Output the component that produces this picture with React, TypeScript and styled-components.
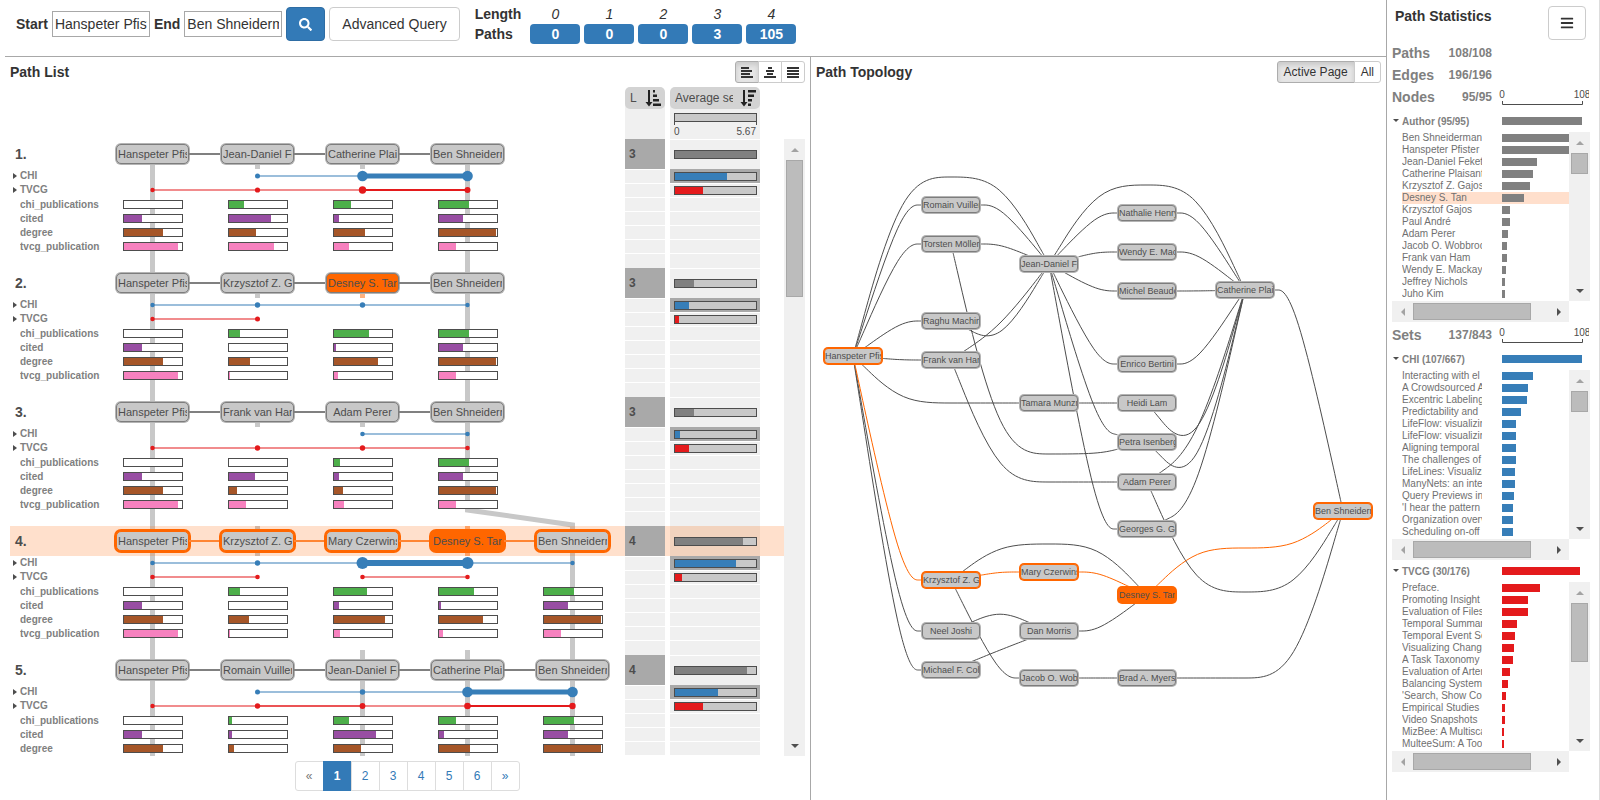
import React from "react";
import styled, { createGlobalStyle, css } from "styled-components";
import { FaSearch, FaBars } from "react-icons/fa";

const BLUE = "#377eb8";
const RED = "#e41a1c";
const GREY = "#808080";
const ORANGE = "#ff6600";
const LINE = "#a8a8a8";

const GlobalStyle = createGlobalStyle`
  *, *::before, *::after { box-sizing: border-box; }
  body {
    margin: 0;
    background: #fff;
    color: #333;
    font-family: "Liberation Sans", Arial, sans-serif;
    font-size: 14px;
    line-height: 20px;
  }
  button, input { font-family: inherit; color: inherit; }
  button { cursor: pointer; }
`;

/* ---------- data ---------- */

type Track = { from: number; radii: number[]; segs: number[] };
type PathInfo = {
  names: string[];
  chi: Track;
  tvcg: Track[];
  bars: number[][];
  avg: number[];
  length: number;
  active?: boolean;
};

const PATHS: PathInfo[] = [
  {
    names: ["Hanspeter Pfister", "Jean-Daniel Fekete", "Catherine Plaisant", "Ben Shneiderman"],
    chi: { from: 1, radii: [2.5, 5.3, 5.3], segs: [1, 5] },
    tvcg: [{ from: 0, radii: [2.2, 2.6, 3.7, 3], segs: [1, 1, 2] }],
    bars: [[0, 15, 17, 30], [18, 42, 5, 24], [39, 27, 31, 57], [54, 45, 15, 17]],
    avg: [81, 52, 28],
    length: 3,
  },
  {
    names: ["Hanspeter Pfister", "Krzysztof Z. Gajos", "Desney S. Tan", "Ben Shneiderman"],
    chi: { from: 0, radii: [2.2, 2.7, 2.7, 2.2], segs: [1, 1, 1] },
    tvcg: [{ from: 0, radii: [2.2, 2.5], segs: [1] }],
    bars: [[0, 11, 35, 30], [18, 0, 2, 24], [39, 21, 44, 57], [54, 1, 4, 17]],
    avg: [19, 14, 4],
    length: 3,
  },
  {
    names: ["Hanspeter Pfister", "Frank van Ham", "Adam Perer", "Ben Shneiderman"],
    chi: { from: 2, radii: [2.3, 2.3], segs: [1] },
    tvcg: [{ from: 0, radii: [2.2, 2.7, 2.7, 2.3], segs: [1, 1, 1] }],
    bars: [[0, 0, 6, 30], [18, 26, 5, 24], [39, 8, 9, 57], [54, 17, 10, 17]],
    avg: [19, 5, 14],
    length: 3,
  },
  {
    names: ["Hanspeter Pfister", "Krzysztof Z. Gajos", "Mary Czerwinski", "Desney S. Tan", "Ben Shneiderman"],
    chi: { from: 0, radii: [2.3, 2.7, 6, 6, 2.2], segs: [1, 1, 6, 1] },
    tvcg: [
      { from: 0, radii: [2.3, 2.3], segs: [1] },
      { from: 2, radii: [2.3, 2.3], segs: [1] },
    ],
    bars: [[0, 11, 33, 35, 30], [18, 0, 5, 2, 24], [39, 20, 51, 44, 57], [54, 1, 6, 4, 17]],
    avg: [68, 61, 7],
    length: 4,
    active: true,
  },
  {
    names: ["Hanspeter Pfister", "Romain Vuillemot", "Jean-Daniel Fekete", "Catherine Plaisant", "Ben Shneiderman"],
    chi: { from: 1, radii: [2.5, 2.7, 5.3, 5.3], segs: [1, 1, 5] },
    tvcg: [{ from: 0, radii: [2.2, 2.7, 2.9, 3.3, 3.2], segs: [1, 1.5, 1, 2] }],
    bars: [[0, 3, 15, 17, 30], [18, 3, 42, 5, 24], [39, 5, 27, 31, 57], [54, 1, 45, 15, 17]],
    avg: [72, 43, 28],
    length: 4,
  },
];

const ATTRIBUTES = [
  { name: "chi_publications", color: "#4daf4a" },
  { name: "cited", color: "#984ea3" },
  { name: "degree", color: "#a65628" },
  { name: "tvcg_publications", color: "#f781bf" },
];

type StatItem = [string, number];

const AUTHORS: StatItem[] = [
  ["Ben Shneiderman", 80], ["Hanspeter Pfister", 80], ["Jean-Daniel Fekete", 35], ["Catherine Plaisant", 31],
  ["Krzysztof Z. Gajos", 28], ["Desney S. Tan", 22], ["Krzysztof Gajos", 8], ["Paul André", 8],
  ["Adam Perer", 6], ["Jacob O. Wobbrock", 5], ["Frank van Ham", 5], ["Wendy E. Mackay", 4],
  ["Jeffrey Nichols", 3], ["Juho Kim", 3],
];

const CHI_PAPERS: StatItem[] = [
  ["Interacting with el", 31], ["A Crowdsourced A", 26], ["Excentric Labeling", 25], ["Predictability and", 19],
  ["LifeFlow: visualizin", 14], ["LifeFlow: visualizin", 14], ["Aligning temporal", 14], ["The challenges of", 14],
  ["LifeLines: Visualizi", 13], ["ManyNets: an inter", 13], ["Query Previews in", 12], ["'I hear the pattern", 11],
  ["Organization overv", 11], ["Scheduling on-off", 11],
];

const TVCG_PAPERS: StatItem[] = [
  ["Preface.", 38], ["Promoting Insight", 26], ["Evaluation of Files", 26], ["Temporal Summari", 15],
  ["Temporal Event Se", 13], ["Visualizing Change", 12], ["A Task Taxonomy", 11], ["Evaluation of Artery", 8],
  ["Balancing Systema", 6], ["'Search, Show Con", 4], ["Empirical Studies", 3], ["Video Snapshots", 3],
  ["MizBee: A Multisca", 2], ["MulteeSum: A Tool", 2],
];

/* ---------- page frame ---------- */

const Page = styled.div`
  display: grid;
  grid-template-columns: minmax(0, 1fr) 214px;
  min-height: 100vh;
`;

const Main = styled.main`
  display: flex;
  flex-direction: column;
  padding-left: 5px;
`;

const QueryBar = styled.header`
  display: flex;
  align-items: center;
  height: 57px;
  padding: 0 0 8px 11px;
  border-bottom: 1px solid ${LINE};
`;

const QueryForm = styled.form`
  display: flex;
  align-items: center;
  gap: 4px;
  margin-right: 15px;
`;

const FieldLabel = styled.label`
  font-weight: bold;
`;

const TextField = styled.input`
  width: 98px;
  height: 26px;
  padding: 1px 2px;
  border: 1px solid ${LINE};
  font-size: 14px;
`;

const Button = styled.button<{ $primary?: boolean }>`
  display: flex;
  align-items: center;
  justify-content: center;
  height: 34px;
  padding: 0 12px;
  border: 1px solid ${(p) => (p.$primary ? "#2e6da4" : "#ccc")};
  border-radius: 4px;
  background: ${(p) => (p.$primary ? "#337ab7" : "#fff")};
  color: ${(p) => (p.$primary ? "#fff" : "#333")};
  font-size: 14px;
  white-space: nowrap;
`;

const LengthTable = styled.table`
  border-collapse: collapse;
  th, td { height: 20px; padding: 0 2px; text-align: center; }
  th[scope="row"] { padding: 0 7px 0 0; text-align: left; }
  th[scope="col"] { font-weight: normal; font-style: italic; }
`;

const CountBadge = styled.span`
  display: block;
  width: 50px;
  border-radius: 4px;
  background: #337ab7;
  color: #fff;
  font-weight: bold;
`;

const Panes = styled.div`
  display: grid;
  flex: 1;
  grid-template-columns: minmax(0, 805fr) minmax(0, 576fr);
`;

const Pane = styled.section<{ $divided?: boolean }>`
  display: flex;
  flex-direction: column;
  border-left: ${(p) => (p.$divided ? `1px solid ${LINE}` : "none")};
`;

const PaneBar = styled.div`
  display: flex;
  align-items: center;
  justify-content: space-between;
  height: 30px;
  padding: 0 5px;
`;

const Title = styled.h2`
  margin: 0;
  font-size: 14px;
  line-height: 20px;
  font-weight: bold;
`;

const ButtonGroup = styled.div`
  display: flex;
  button + button { margin-left: -1px; }
  button:first-child { border-radius: 3px 0 0 3px; }
  button:last-child { border-radius: 0 3px 3px 0; }
`;

const SmallButton = styled.button<{ $on?: boolean }>`
  display: flex;
  align-items: center;
  justify-content: center;
  height: 22px;
  padding: 0 5px;
  border: 1px solid ${(p) => (p.$on ? "#adadad" : "#ccc")};
  background: ${(p) => (p.$on ? "#e6e6e6" : "#fff")};
  box-shadow: ${(p) => (p.$on ? "inset 0 3px 5px rgba(0,0,0,0.125)" : "none")};
  font-size: 12px;
`;

const TextButton = styled(SmallButton)`
  padding: 0 6px;
`;

/* ---------- scroll bars ---------- */

const Track = styled.div<{ $horizontal?: boolean }>`
  display: flex;
  flex: none;
  flex-direction: ${(p) => (p.$horizontal ? "row" : "column")};
  align-items: center;
  background: #f0f0f0;
  ${(p) => (p.$horizontal ? "height: 21px;" : "width: 21px;")}
`;

const Thumb = styled.div<{ $length: number; $horizontal?: boolean }>`
  border: 1px solid #a8a8a8;
  background: #bcbcbc;
  width: ${(p) => (p.$horizontal ? p.$length : 17)}px;
  height: ${(p) => (p.$horizontal ? 17 : p.$length)}px;
`;

const Arrow = styled.button<{ $faded?: boolean; $last?: boolean }>`
  display: flex;
  align-items: center;
  justify-content: center;
  width: 21px;
  height: 21px;
  padding: 0;
  border: 0;
  background: none;
  color: ${(p) => (p.$faded ? "#a3a3a3" : "#505050")};
  ${(p) => p.$last && "margin: auto 0 0;"}
`;

const HArrow = styled(Arrow)`
  ${(p) => p.$last && "margin: 0 0 0 auto;"}
`;

function VScroll({ length }: { length: number }) {
  return (
    <Track>
      <Arrow $faded aria-label="Scroll up"><svg width="8" height="4"><path d="M0 4L4 0L8 4Z" fill="currentColor" /></svg></Arrow>
      <Thumb $length={length} />
      <Arrow $last aria-label="Scroll down"><svg width="8" height="4"><path d="M0 0L4 4L8 0Z" fill="currentColor" /></svg></Arrow>
    </Track>
  );
}

function HScroll({ length }: { length: number }) {
  return (
    <Track $horizontal>
      <HArrow $faded aria-label="Scroll left"><svg width="4" height="8"><path d="M4 0L0 4L4 8Z" fill="currentColor" /></svg></HArrow>
      <Thumb $horizontal $length={length} />
      <HArrow $last aria-label="Scroll right"><svg width="4" height="8"><path d="M0 0L4 4L0 8Z" fill="currentColor" /></svg></HArrow>
    </Track>
  );
}

/* ---------- path list ---------- */

const ListHead = styled.div`
  display: flex;
  justify-content: flex-end;
  gap: 5px;
  height: 52px;
  padding-right: 50px;
`;

const ColumnHead = styled.div<{ $width: number }>`
  width: ${(p) => p.$width}px;
  background: linear-gradient(#fff 11px, #f0f0f0 11px);
  color: #4d4d4d;
`;

const SortButton = styled.button`
  display: flex;
  align-items: center;
  justify-content: space-between;
  gap: 7px;
  width: 100%;
  height: 22px;
  padding: 0 4px 0 5px;
  border: 0;
  border-radius: 5px;
  background: #d3d3d3;
  font-size: 12px;
  color: #4d4d4d;
`;

const Clip = styled.span`
  overflow: hidden;
  white-space: nowrap;
`;

const SortGlyph = styled.svg`
  flex: none;
`;

function SortIcon({ widths }: { widths: number[] }) {
  return (
    <SortGlyph width="16" height="18" fill="#222">
      <path d="M3 1H5V13H7.5L4 17.500L0.500 13H3Z" />
      {widths.map((w, i) => <rect key={i} x="8" y={1 + 4.500 * i} width={w} height="2.500" />)}
    </SortGlyph>
  );
}

const ScaleBox = styled.div`
  margin: 4px 3px 0 4px;
  height: 12px;
  border: solid #4d4d4d;
  border-width: 1px 1px 0;
  &::before {
    content: "";
    display: block;
    height: 8px;
    background: #c8c8c8;
    border-bottom: 1px solid #4d4d4d;
  }
`;

const ScaleText = styled.div`
  display: flex;
  justify-content: space-between;
  padding: 1px 4px 0;
  font-size: 10px;
  line-height: 12px;
`;

const ListBody = styled.div`
  display: flex;
  height: 617px;
  margin: 0 5px;
  overflow: hidden;
`;

const Blocks = styled.div`
  position: relative;
  flex: 1;
`;

const Ribbons = styled.svg`
  position: absolute;
  left: 0;
  top: 0;
`;

const Block = styled.div`
  position: relative;
`;

const Row = styled.div<{ $height: number; $active?: boolean }>`
  display: grid;
  grid-template-columns: minmax(0, 1fr) 40px 90px;
  grid-template-rows: ${(p) => p.$height}px;
  column-gap: 5px;
  padding-right: 24px;
  background: ${(p) => (p.$active ? "rgba(255,102,0,0.2)" : "transparent")};
`;

const Lane = styled.div`
  display: flex;
  margin-right: -5px;
`;

const Rank = styled.div`
  width: 90px;
  padding: 5px 0 0 5px;
  color: #4d4d4d;
  font-weight: bold;
`;

const laneLabel = css`
  flex: none;
  width: 80px;
  margin-right: 10px;
  overflow: hidden;
  white-space: nowrap;
  color: ${GREY};
  font-size: 10px;
  line-height: 14px;
  font-weight: bold;
  text-align: left;
`;

const SetLabel = styled.button`
  ${laneLabel}
  display: flex;
  align-items: center;
  gap: 3px;
  width: 90px;
  margin: 0;
  padding: 0 0 0 3px;
  border: 0;
  background: none;
`;

const AttributeLabel = styled.div`
  ${laneLabel}
  height: 14px;
  margin-left: 10px;
  margin-right: 0;
  line-height: 15px;
`;

const NodeCell = styled.div`
  display: flex;
  align-items: center;
  width: 105px;
`;

const Link = styled.div<{ $color: string }>`
  flex: 1;
  height: 2px;
  background: ${(p) => p.$color};
`;

type NodeState = "plain" | "path" | "selected" | "marked";

const frameColor = (s: NodeState) => (s === "plain" || s === "selected" ? "#7d7d7d" : ORANGE);

const Node = styled.button<{ $state: NodeState }>`
  display: flex;
  align-items: center;
  justify-content: center;
  width: 73px;
  height: 20px;
  padding: 0 1px;
  border: 1px solid ${(p) => frameColor(p.$state)};
  border-radius: 5px;
  box-shadow: 0 0 0 ${(p) => (frameColor(p.$state) === ORANGE ? `2px ${ORANGE}` : "1px #b4b4b4")};
  background: ${(p) => (p.$state === "selected" || p.$state === "marked" ? ORANGE : "#c8c8c8")};
  color: #4d4d4d;
  font-size: 11px;
  line-height: 14px;
`;

const NodeText = styled.span`
  max-width: 100%;
  overflow: hidden;
  white-space: nowrap;
`;

const BarCell = styled.div`
  display: flex;
  width: 105px;
  padding: 3px 0 0 23px;
`;

const Bar = styled.div<{ $fill: number; $color: string; $back?: string }>`
  width: ${(p) => (p.$back ? 83 : 60)}px;
  height: 9px;
  border: 1px solid #4d4d4d;
  background: ${(p) => p.$back || "#fff"};
  &::before {
    content: "";
    display: block;
    width: ${(p) => p.$fill}px;
    height: 100%;
    background: ${(p) => p.$color};
  }
`;

const Cell = styled.div<{ $dark?: boolean; $tinted?: boolean; $top?: number }>`
  padding: ${(p) => p.$top ?? 3}px 0 0 4px;
  background: ${(p) => (p.$dark ? "#a9a9a9" : p.$tinted ? "#f2d3be" : "#f0f0f0")};
  box-shadow: ${(p) => (p.$dark || p.$tinted ? "none" : "inset 0 1px #fff")};
  color: #4d4d4d;
  font-size: 12px;
  font-weight: bold;
`;

const Tracks = styled.svg`
  flex: none;
  overflow: visible;
`;

const cx = (i: number) => 52.5 + 105 * i;

function TrackLines({ tracks, color }: { tracks: Track[]; color: string }) {
  return (
    <Tracks width="510" height="14">
      {tracks.map((t) => (
        <g key={t.from} stroke={color} fill={color}>
          {t.segs.map((w, i) => (
            <line
              key={`s${i}`}
              x1={cx(t.from + i)}
              x2={cx(t.from + i + 1)}
              y1="7"
              y2="7"
              strokeWidth={Math.max(2, w)}
              strokeOpacity={w === 1 ? 0.5 : w === 1.5 ? 0.75 : 1}
            />
          ))}
          {t.radii.map((r, i) => (
            <circle key={`c${i}`} cx={cx(t.from + i)} cy="7" r={r} stroke="none" />
          ))}
        </g>
      ))}
    </Tracks>
  );
}

const Expander = () => (
  <svg width="4" height="6"><path d="M0 0L4 3L0 6Z" fill="#4d4d4d" /></svg>
);

function PathBlock({ path, index }: { path: PathInfo; index: number }) {
  const { names, active } = path;
  const linkColor = active ? "#ff8533" : GREY;
  const last = names.length - 1;
  return (
    <Block>
      <Row $height={30} $active={active}>
        <Lane>
          <Rank>{index + 1}.</Rank>
          {names.map((name, i) => {
            const picked = name === "Desney S. Tan";
            const state: NodeState = picked ? (active ? "marked" : "selected") : active ? "path" : "plain";
            return (
              <NodeCell key={name}>
                <Link $color={i === 0 ? "transparent" : linkColor} />
                <Node $state={state}><NodeText>{name}</NodeText></Node>
                <Link $color={i === last ? "transparent" : linkColor} />
              </NodeCell>
            );
          })}
        </Lane>
        <Cell $dark $top={5}>{path.length}</Cell>
        <Cell $tinted={active} $top={11}><Bar $fill={path.avg[0]} $color={GREY} $back="#c8c8c8" /></Cell>
      </Row>
      <Row $height={14}>
        <Lane>
          <SetLabel><Expander />CHI</SetLabel>
          <TrackLines tracks={[path.chi]} color={BLUE} />
        </Lane>
        <Cell />
        <Cell $dark><Bar $fill={path.avg[1]} $color={BLUE} $back="#c8c8c8" /></Cell>
      </Row>
      <Row $height={14}>
        <Lane>
          <SetLabel><Expander />TVCG</SetLabel>
          <TrackLines tracks={path.tvcg} color={RED} />
        </Lane>
        <Cell />
        <Cell><Bar $fill={path.avg[2]} $color={RED} $back="#c8c8c8" /></Cell>
      </Row>
      {ATTRIBUTES.map((attribute, a) => (
        <Row key={attribute.name} $height={14}>
          <Lane>
            <AttributeLabel>{attribute.name}</AttributeLabel>
            {path.bars[a].map((fill, i) => (
              <BarCell key={i}><Bar $fill={fill} $color={attribute.color} /></BarCell>
            ))}
          </Lane>
          <Cell />
          <Cell />
        </Row>
      ))}
      <Row $height={15}><span /><Cell /><Cell /></Row>
    </Block>
  );
}

/* Vertical bands that tie the same author together across neighbouring paths. */
function AuthorRibbons() {
  const x = (i: number) => 90 + cx(i);
  const bottom = 617;
  const bands: [number, number, number, string?][] = [
    [0, 15, bottom],
    [3, 15, 370],
    [4, 386, bottom],
    [1, 15, 30], [2, 15, 30],
    [1, 144, 159], [2, 144, 159, "#ffb27f"],
    [1, 273, 288], [2, 273, 288],
    [1, 387, 417], [3, 387, 417, "#ffb27f"],
    [2, 511, bottom], [3, 511, bottom],
  ];
  return (
    <Ribbons width="615" height={bottom} fill="none" strokeWidth="5">
      {bands.map(([col, y1, y2, color], i) => (
        <path key={i} d={`M${x(col)} ${y1}V${y2}`} stroke={color || "#c8c8c8"} />
      ))}
      <path d={`M${x(3)} 366V371L${x(4)} 386V390`} stroke="#c8c8c8" />
    </Ribbons>
  );
}

const Pager = styled.nav`
  display: flex;
  justify-content: center;
  margin-top: 5px;
  padding-right: 2px;
`;

const PageLink = styled.a<{ $on?: boolean; $off?: boolean }>`
  width: 29px;
  height: 30px;
  margin-right: -1px;
  border: 1px solid ${(p) => (p.$on ? "#337ab7" : "#ddd")};
  background: ${(p) => (p.$on ? "#337ab7" : "#fff")};
  color: ${(p) => (p.$on ? "#fff" : p.$off ? "#777" : "#337ab7")};
  font-size: 12px;
  font-weight: ${(p) => (p.$on ? "bold" : "normal")};
  line-height: 28px;
  text-align: center;
  text-decoration: none;
  &:first-child { border-radius: 3px 0 0 3px; }
  &:last-child { border-radius: 0 3px 3px 0; }
`;

const ALIGN = {
  left: [[0, 8], [0, 11], [0, 9], [0, 12]],
  center: [[4, 4], [2, 8], [3, 6], [0, 12]],
  justify: [[0, 12], [0, 12], [0, 12], [0, 12]],
};

function AlignIcon({ kind }: { kind: keyof typeof ALIGN }) {
  return (
    <svg width="12" height="12" fill="#333">
      {ALIGN[kind].map(([x, w], i) => (
        <rect key={i} x={x} y={1 + 3 * i} width={w} height="2" />
      ))}
    </svg>
  );
}

function PathList() {
  return (
    <Pane>
      <PaneBar>
        <Title>Path List</Title>
        <ButtonGroup>
          <SmallButton $on aria-label="Align left"><AlignIcon kind="left" /></SmallButton>
          <SmallButton aria-label="Align center"><AlignIcon kind="center" /></SmallButton>
          <SmallButton aria-label="Justify"><AlignIcon kind="justify" /></SmallButton>
        </ButtonGroup>
      </PaneBar>
      <ListHead>
        <ColumnHead $width={40}>
          <SortButton><Clip>L</Clip><SortIcon widths={[2, 4, 6, 8]} /></SortButton>
        </ColumnHead>
        <ColumnHead $width={90}>
          <SortButton><Clip>Average set size</Clip><SortIcon widths={[8, 6, 4, 3]} /></SortButton>
          <ScaleBox />
          <ScaleText><span>0</span><span>5.67</span></ScaleText>
        </ColumnHead>
      </ListHead>
      <ListBody>
        <Blocks>
          <AuthorRibbons />
          {PATHS.map((p, i) => <PathBlock key={i} path={p} index={i} />)}
        </Blocks>
        <VScroll length={137} />
      </ListBody>
      <Pager aria-label="Pages">
        <PageLink href="#" $off>«</PageLink>
        {[1, 2, 3, 4, 5, 6].map((n) => <PageLink key={n} href="#" $on={n === 1}>{n}</PageLink>)}
        <PageLink href="#">»</PageLink>
      </Pager>
    </Pane>
  );
}

/* ---------- topology ---------- */

type GraphNode = { name: string; col: number; y: number; state?: NodeState };

const NODES: Record<string, GraphNode> = {
  hp: { name: "Hanspeter Pfister", col: 0, y: 269, state: "path" },
  rv: { name: "Romain Vuillemot", col: 1, y: 118 },
  tm: { name: "Torsten Möller", col: 1, y: 157 },
  rm: { name: "Raghu Machiraju", col: 1, y: 234 },
  fh: { name: "Frank van Ham", col: 1, y: 273 },
  kg: { name: "Krzysztof Z. Gajos", col: 1, y: 493, state: "path" },
  nj: { name: "Neel Joshi", col: 1, y: 544 },
  mc: { name: "Michael F. Cohen", col: 1, y: 583 },
  jd: { name: "Jean-Daniel Fekete", col: 2, y: 177 },
  tz: { name: "Tamara Munzner", col: 2, y: 316 },
  mz: { name: "Mary Czerwinski", col: 2, y: 485, state: "path" },
  dm: { name: "Dan Morris", col: 2, y: 544 },
  jw: { name: "Jacob O. Wobbrock", col: 2, y: 591 },
  nh: { name: "Nathalie Henry", col: 3, y: 126 },
  wm: { name: "Wendy E. Mackay", col: 3, y: 165 },
  mb: { name: "Michel Beaudouin", col: 3, y: 204 },
  eb: { name: "Enrico Bertini", col: 3, y: 277 },
  hl: { name: "Heidi Lam", col: 3, y: 316 },
  pi: { name: "Petra Isenberg", col: 3, y: 355 },
  ap: { name: "Adam Perer", col: 3, y: 395 },
  gg: { name: "Georges G. Grinstein", col: 3, y: 442 },
  dt: { name: "Desney S. Tan", col: 3, y: 508, state: "marked" },
  bm: { name: "Brad A. Myers", col: 3, y: 591 },
  cp: { name: "Catherine Plaisant", col: 4, y: 203 },
  bs: { name: "Ben Shneiderman", col: 5, y: 424, state: "path" },
};

/* source, target, height at which the edge runs between their columns */
const EDGES: [string, string, number, boolean?][] = [
  ["hp", "jd", 90], ["hp", "rv", 118], ["hp", "tm", 157], ["hp", "rm", 234], ["hp", "fh", 273],
  ["hp", "tz", 316], ["hp", "nj", 544], ["hp", "mc", 583], ["hp", "kg", 493, true],
  ["rv", "jd", 118], ["tm", "jd", 157], ["tm", "pi", 367], ["rm", "jd", 258], ["fh", "jd", 240],
  ["fh", "ap", 395], ["tz", "hl", 316], ["kg", "dt", 457], ["kg", "jw", 591], ["nj", "dm", 523],
  ["mc", "dm", 563], ["dm", "dt", 544], ["jw", "bm", 591], ["kg", "mz", 485, true], ["mz", "dt", 485, true],
  ["jd", "cp", 98], ["jd", "nh", 126], ["jd", "wm", 165], ["jd", "mb", 204], ["jd", "eb", 277],
  ["jd", "pi", 343], ["jd", "gg", 442], ["nh", "cp", 126], ["wm", "cp", 165], ["mb", "cp", 204],
  ["eb", "cp", 277], ["hl", "cp", 376], ["pi", "cp", 405], ["ap", "cp", 360], ["gg", "cp", 418],
  ["ap", "bs", 505], ["bm", "bs", 591], ["cp", "bs", 203], ["dt", "bs", 461, true],
];

type Point = [number, number];

const centre = (n: GraphNode): Point => [42 + 98 * n.col, n.y];

/* Where the line from a node's centre towards a point leaves the node's box. */
function border(n: GraphNode, [px, py]: Point): Point {
  const [x, y] = centre(n);
  const dx = px - x;
  const dy = py - y;
  const k = Math.min(29.5 / Math.abs(dx || 0.001), 8.5 / Math.abs(dy || 0.001));
  return [x + dx * k, y + dy * k];
}

/* Uniform cubic B-spline with its ends pinned. */
function spline(p: Point[]) {
  const f = (v: number) => v.toFixed(1);
  const mix = (a: Point, b: Point, wa: number, wb: number, d: number) =>
    `${f((a[0] * wa + b[0] * wb) / d)} ${f((a[1] * wa + b[1] * wb) / d)}`;
  const pts = [p[0], p[0], ...p, p[p.length - 1]];
  let d = `M${f(p[0][0])} ${f(p[0][1])}`;
  for (let i = 2; i < pts.length; i++) {
    const a = pts[i - 1];
    const b = pts[i];
    const c = pts[i + 1] || b;
    const end: Point = [(a[0] + 4 * b[0] + c[0]) / 6, (a[1] + 4 * b[1] + c[1]) / 6];
    d += `C${mix(a, b, 2, 1, 3)} ${mix(a, b, 1, 2, 3)} ${f(end[0])} ${f(end[1])}`;
  }
  return d;
}

function edgePath(from: GraphNode, to: GraphNode, y: number) {
  const inner: Point[] = [];
  for (let x = centre(from)[0] + 49; x < centre(to)[0] - 1; x += 49) inner.push([x, y]);
  return spline([border(from, inner[0]), ...inner, border(to, inner[inner.length - 1])]);
}

const Canvas = styled.div`
  position: relative;
  flex: 1;
  min-height: 620px;
  overflow: hidden;
`;

const EdgeLayer = styled.svg`
  position: absolute;
  left: 0;
  top: 0;
`;

const GraphBox = styled(Node)<{ $col: number; $y: number }>`
  position: absolute;
  left: ${(p) => 13 + 98 * p.$col}px;
  top: ${(p) => p.$y - 8}px;
  width: 58px;
  height: 16px;
  padding: 0;
  border-radius: 4px;
  box-shadow: 0 0 0 1px ${(p) => (p.$state === "plain" ? "#b4b4b4" : ORANGE)};
  font-size: 9px;
  line-height: 12px;
`;

function Topology() {
  return (
    <Pane $divided>
      <PaneBar>
        <Title>Path Topology</Title>
        <ButtonGroup>
          <TextButton $on>Active Page</TextButton>
          <TextButton>All</TextButton>
        </ButtonGroup>
      </PaneBar>
      <Canvas>
        <EdgeLayer width="575" height="620" fill="none">
          {EDGES.map(([a, b, y, hot]) => (
            <path key={a + b} d={edgePath(NODES[a], NODES[b], y)} stroke={hot ? ORANGE : "#4d4d4d"} strokeWidth="1" />
          ))}
        </EdgeLayer>
        {Object.values(NODES).map((n) => (
          <GraphBox key={n.name} $col={n.col} $y={n.y} $state={n.state || "plain"}><NodeText>{n.name}</NodeText></GraphBox>
        ))}
      </Canvas>
    </Pane>
  );
}

/* ---------- statistics ---------- */

const Sidebar = styled.aside`
  padding: 6px 10px 0 5px;
  border: solid ${LINE};
  border-width: 0 0 0 1px;
  box-shadow: inset -1px 0 #ddd;
`;

const SidebarTop = styled.div`
  display: flex;
  align-items: flex-start;
  justify-content: space-between;
  height: 34px;
  padding: 0 4px 0 3px;
`;

const MenuButton = styled(Button)`
  width: 38px;
  padding: 0;
`;

const Totals = styled.div`
  padding: 2px 0;
`;

const StatRow = styled.div`
  display: flex;
  height: 22px;
  line-height: 22px;
  color: ${GREY};
  font-weight: bold;
`;

const StatName = styled.span`
  width: 50px;
`;

const StatValue = styled.span`
  width: 50px;
  margin-right: 5px;
  font-size: 12px;
  text-align: right;
`;

const GroupHead = styled.button`
  display: flex;
  align-items: center;
  gap: 3px;
  height: 22px;
  padding: 0 0 0 1px;
  border: 0;
  background: none;
  color: ${GREY};
  font-size: 10px;
  font-weight: bold;
`;

const GroupName = styled.span`
  width: 97px;
  text-align: left;
`;

const MiniBar = styled.span<{ $width: number; $color: string }>`
  width: ${(p) => p.$width}px;
  height: 8px;
  background: ${(p) => p.$color};
`;

const GroupBody = styled.div`
  display: flex;
  height: 169px;
  padding-left: 10px;
`;

const Items = styled.ul`
  flex: 1;
  margin: 0;
  padding: 0;
  list-style: none;
  overflow: hidden;
`;

const Item = styled.li<{ $on?: boolean }>`
  display: grid;
  grid-template-columns: 80px 66px;
  column-gap: 20px;
  align-items: center;
  height: 12px;
  overflow: hidden;
  background: ${(p) => (p.$on ? "#ffdfcc" : "transparent")};
  color: #707070;
  font-size: 10px;
  line-height: 12px;
`;

const GroupFoot = styled.div`
  margin-right: 21px;
`;

function Axis() {
  return (
    <svg width="92" height="22" fontSize="10" fontWeight="normal" fill="#4d4d4d">
      <text x="5" y="12" textAnchor="middle">0</text>
      <text x="85" y="12" textAnchor="middle">108</text>
      <path d="M5.5 15V18.5H85.5V15" fill="none" stroke="#4d4d4d" />
    </svg>
  );
}

type GroupProps = { title: string; width: number; color: string; items: StatItem[]; thumb: number; selected?: string };

function Group({ title, width, color, items, thumb, selected }: GroupProps) {
  return (
    <>
      <GroupHead>
        <svg width="6" height="4"><path d="M0 0L3 3L6 0Z" fill="#4d4d4d" /></svg>
        <GroupName>{title}</GroupName>
        <MiniBar $width={width} $color={color} />
      </GroupHead>
      <GroupBody>
        <Items>
          {items.map(([name, w], i) => (
            <Item key={i} $on={name === selected}><Clip>{name}</Clip><MiniBar $width={w} $color={color} /></Item>
          ))}
        </Items>
        <VScroll length={thumb} />
      </GroupBody>
      <GroupFoot><HScroll length={118} /></GroupFoot>
    </>
  );
}

function Statistics() {
  return (
    <Sidebar>
      <SidebarTop>
        <Title>Path Statistics</Title>
        <MenuButton aria-label="Menu"><FaBars size={14} /></MenuButton>
      </SidebarTop>
      <Totals>
        <StatRow><StatName>Paths</StatName><StatValue>108/108</StatValue></StatRow>
        <StatRow><StatName>Edges</StatName><StatValue>196/196</StatValue></StatRow>
        <StatRow><StatName>Nodes</StatName><StatValue>95/95</StatValue><Axis /></StatRow>
      </Totals>
      <Group title="Author (95/95)" width={80} color={GREY} items={AUTHORS} thumb={21} selected="Desney S. Tan" />
      <Totals>
        <StatRow><StatName>Sets</StatName><StatValue>137/843</StatValue><Axis /></StatRow>
      </Totals>
      <Group title="CHI (107/667)" width={80} color={BLUE} items={CHI_PAPERS} thumb={21} />
      <Group title="TVCG (30/176)" width={78} color={RED} items={TVCG_PAPERS} thumb={59} />
    </Sidebar>
  );
}

/* ---------- app ---------- */

const COUNTS = [0, 0, 0, 3, 105];

export default function App() {
  return (
    <Page>
      <GlobalStyle />
      <Main>
        <QueryBar>
          <QueryForm onSubmit={(e) => e.preventDefault()}>
            <FieldLabel htmlFor="start">Start</FieldLabel>
            <TextField id="start" type="text" defaultValue="Hanspeter Pfister" />
            <FieldLabel htmlFor="end">End</FieldLabel>
            <TextField id="end" type="text" defaultValue="Ben Shneiderman" />
            <Button $primary type="submit" aria-label="Search"><FaSearch size={13} /></Button>
            <Button type="button">Advanced Query</Button>
          </QueryForm>
          <LengthTable>
            <tbody>
              <tr>
                <th scope="row">Length</th>
                {COUNTS.map((_, i) => <th key={i} scope="col">{i}</th>)}
              </tr>
              <tr>
                <th scope="row">Paths</th>
                {COUNTS.map((c, i) => <td key={i}><CountBadge>{c}</CountBadge></td>)}
              </tr>
            </tbody>
          </LengthTable>
        </QueryBar>
        <Panes>
          <PathList />
          <Topology />
        </Panes>
      </Main>
      <Statistics />
    </Page>
  );
}
